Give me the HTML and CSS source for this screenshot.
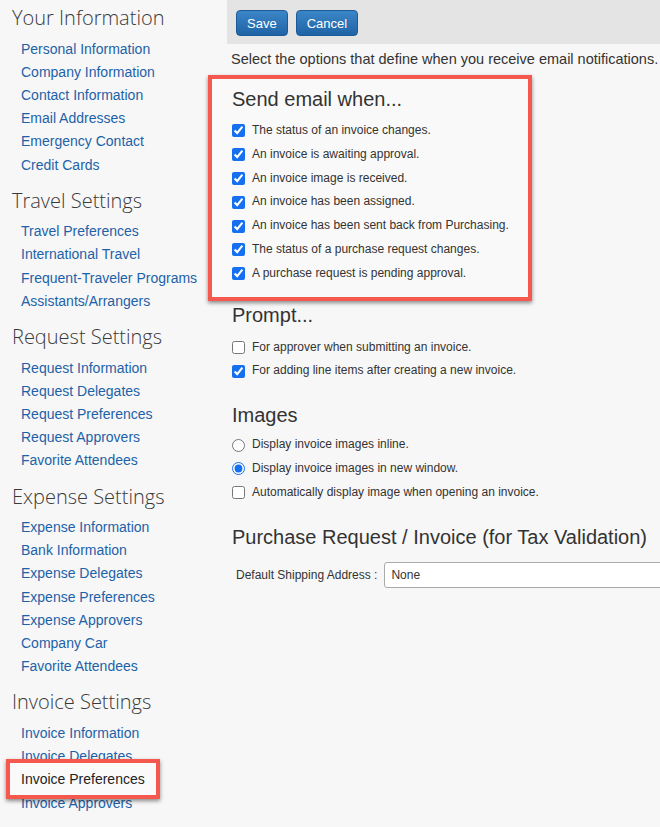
FILE: index.html
```html
<!DOCTYPE html>
<html lang="en">
<head>
    <meta charset="UTF-8">
    <meta name="viewport" content="width=device-width, initial-scale=1.0">
    <title>Invoice Preferences</title>
    <link rel="stylesheet" href="styles.css">
</head>
<body>
    <div class="page">
        <nav class="sidebar">
            <div class="nav-group">
                <h2>Your Information</h2>
                <a href="#">Personal Information</a>
                <a href="#">Company Information</a>
                <a href="#">Contact Information</a>
                <a href="#">Email Addresses</a>
                <a href="#">Emergency Contact</a>
                <a href="#">Credit Cards</a>
            </div>
            <div class="nav-group">
                <h2>Travel Settings</h2>
                <a href="#">Travel Preferences</a>
                <a href="#">International Travel</a>
                <a href="#">Frequent-Traveler Programs</a>
                <a href="#">Assistants/Arrangers</a>
            </div>
            <div class="nav-group">
                <h2>Request Settings</h2>
                <a href="#">Request Information</a>
                <a href="#">Request Delegates</a>
                <a href="#">Request Preferences</a>
                <a href="#">Request Approvers</a>
                <a href="#">Favorite Attendees</a>
            </div>
            <div class="nav-group">
                <h2>Expense Settings</h2>
                <a href="#">Expense Information</a>
                <a href="#">Bank Information</a>
                <a href="#">Expense Delegates</a>
                <a href="#">Expense Preferences</a>
                <a href="#">Expense Approvers</a>
                <a href="#">Company Car</a>
                <a href="#">Favorite Attendees</a>
            </div>
            <div class="nav-group">
                <h2>Invoice Settings</h2>
                <a href="#">Invoice Information</a>
                <a href="#">Invoice Delegates</a>
                <a href="#" class="active">Invoice Preferences</a>
                <a href="#">Invoice Approvers</a>
            </div>
        </nav>

        <main class="content">
            <div class="toolbar">
                <button type="button" class="btn">Save</button>
                <button type="button" class="btn">Cancel</button>
            </div>
            <p class="intro">Select the options that define when you receive email notifications.</p>

            <section class="section callout">
                <h3>Send email when...</h3>
                <label class="option"><input type="checkbox" checked> The status of an invoice changes.</label>
                <label class="option"><input type="checkbox" checked> An invoice is awaiting approval.</label>
                <label class="option"><input type="checkbox" checked> An invoice image is received.</label>
                <label class="option"><input type="checkbox" checked> An invoice has been assigned.</label>
                <label class="option"><input type="checkbox" checked> An invoice has been sent back from Purchasing.</label>
                <label class="option"><input type="checkbox" checked> The status of a purchase request changes.</label>
                <label class="option"><input type="checkbox" checked> A purchase request is pending approval.</label>
            </section>

            <section class="section prompt">
                <h3>Prompt...</h3>
                <label class="option"><input type="checkbox"> For approver when submitting an invoice.</label>
                <label class="option"><input type="checkbox" checked> For adding line items after creating a new invoice.</label>
            </section>

            <section class="section images">
                <h3>Images</h3>
                <label class="option"><input type="radio" name="images"> Display invoice images inline.</label>
                <label class="option"><input type="radio" name="images" checked> Display invoice images in new window.</label>
                <label class="option"><input type="checkbox"> Automatically display image when opening an invoice.</label>
            </section>

            <section class="section">
                <h3>Purchase Request / Invoice (for Tax Validation)</h3>
                <div class="field">
                    <label for="shipping">Default Shipping Address :</label>
                    <select id="shipping">
                        <option>None</option>
                    </select>
                </div>
            </section>
        </main>
    </div>
</body>
</html>
```

FILE: styles.css
```css
body {
    margin: 0;
    background-color: #f7f7f7;
    font-family: "Liberation Sans", Arial, sans-serif;
    color: #333;
    overflow: hidden;
}
.page {
    display: flex;
    height: 827px;
}
.sidebar {
    width: 215px;
    flex-shrink: 0;
    padding: 4px 0 0 12px;
}
.nav-group {
    display: flex;
    flex-direction: column;
    margin-bottom: 10px;
}
.nav-group h2 {
    margin: 0 0 5.5px 0;
    font-family: "Open Sans", sans-serif;
    font-weight: 300;
    font-size: 20px;
    line-height: 28px;
    color: #3a3a3a;
}
.nav-group a {
    margin-left: 9px;
    font-size: 14px;
    line-height: 23.2px;
    color: #1d62a8;
    text-decoration: none;
}
.nav-group a.active {
    position: relative;
    z-index: 1;
    color: #222;
}
.nav-group a.active::before {
    content: "";
    position: absolute;
    left: -15px;
    top: -9px;
    width: 154px;
    height: 40px;
    box-sizing: border-box;
    background-color: #fafafa;
    border: 4px solid #f5584c;
    box-shadow: 0 2px 4px rgba(0, 0, 0, 0.45);
    z-index: -1;
}
.content {
    flex: 1;
    min-width: 0;
}
.toolbar {
    height: 44px;
    background-color: #e4e4e4;
    padding: 10px 0 0 9px;
    box-sizing: border-box;
    display: flex;
    align-items: flex-start;
    gap: 8px;
}
.btn {
    height: 26px;
    padding: 0 10px;
    font-family: "Liberation Sans", Arial, sans-serif;
    font-size: 13px;
    color: white;
    background: linear-gradient(#3b86c8, #1f63a5);
    border: 1px solid #1c5b98;
    border-radius: 4px;
}
.intro {
    margin: 6px 0 0 4px;
    font-size: 14.5px;
    line-height: 18px;
}
.section {
    padding-left: 5px;
    margin-top: 20px;
}
.section h3 {
    margin: 0 0 8px 0;
    font-size: 20px;
    font-weight: normal;
    line-height: 24px;
    color: #333;
}
.callout {
    width: 324px;
    box-sizing: border-box;
    margin: 7px 0 0 -19px;
    padding: 8px 0 11px 20px;
    border: 4px solid #f5584c;
    background-color: #f9f9f9;
    box-shadow: 0 2px 4px rgba(0, 0, 0, 0.45);
}
.prompt {
    margin-top: 2px;
}
.prompt h3 {
    margin-bottom: 9px;
}
.images h3 {
    margin-bottom: 6px;
}
.option {
    display: flex;
    align-items: center;
    font-size: 12px;
    line-height: 23.8px;
    color: #333;
}
.option input {
    width: 13px;
    height: 13px;
    margin: 0 7px 0 0;
    accent-color: #1570f0;
}
.field {
    display: flex;
    align-items: center;
    margin-top: 13px;
    padding-left: 4px;
}
.field label {
    flex-shrink: 0;
    white-space: nowrap;
    font-size: 12px;
    margin-right: 7px;
}
.field select {
    flex-shrink: 0;
    width: 300px;
    height: 26px;
    padding: 0 6px;
    font-family: "Liberation Sans", Arial, sans-serif;
    font-size: 12px;
    color: #333;
    background-color: white;
    border: 1px solid #aaa;
    border-radius: 3px;
    appearance: none;
}
```
